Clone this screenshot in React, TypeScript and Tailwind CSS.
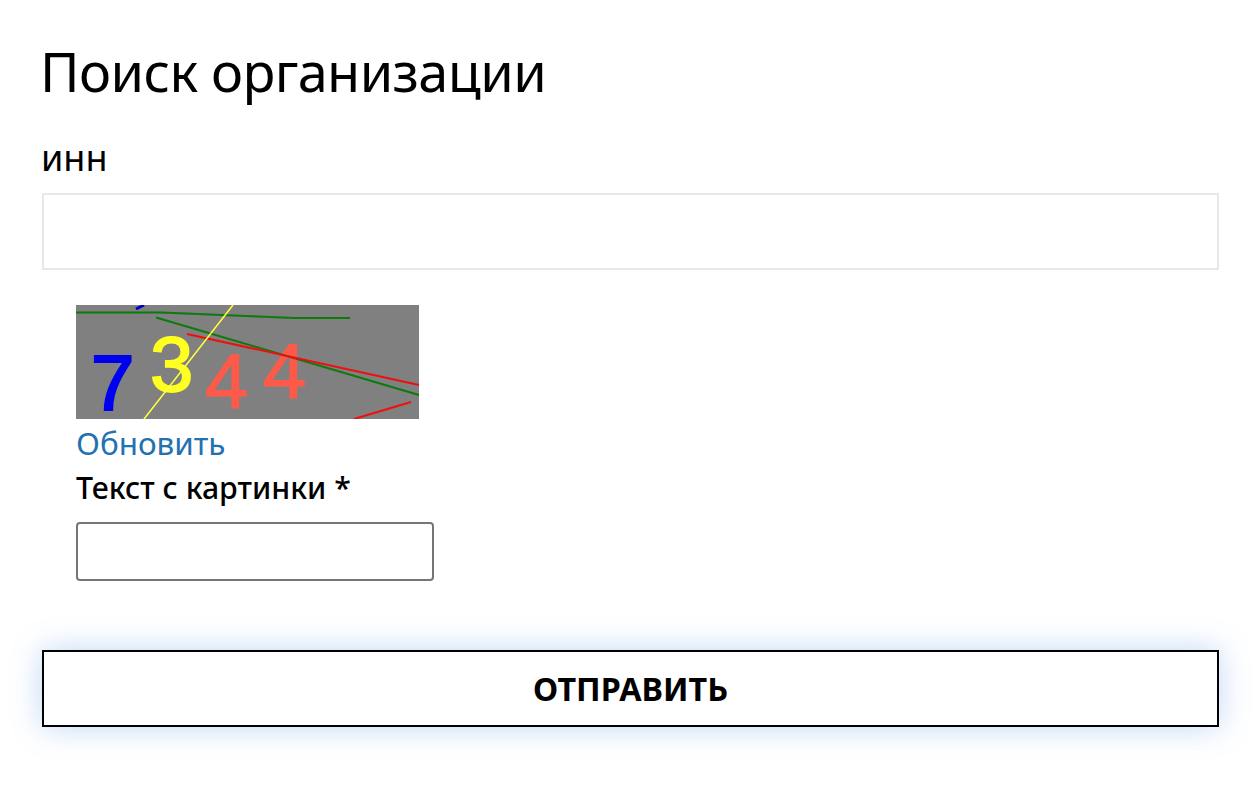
const App = () => {
  return (
    <div className="min-h-[795px] bg-white pl-[42px] pr-[41px] text-black font-['Noto_Sans',sans-serif]">
      {/* заголовок */}
      <h1 className="-ml-[2px] pt-[29px] text-[54px] leading-[84px] font-normal tracking-[-0.6px]">Поиск организации</h1>

      <label className="-ml-[1px] mt-[19px] block text-[36px] leading-[52px]">инн</label>
      <input className="mt-[9px] block h-[77px] w-full border-2 border-[#e8e8e8] bg-white outline-none" />

      {/* капча */}
      <div className="mt-[35px] pl-[34px]">
        <svg width="343" height="114" viewBox="0 0 343 114" className="block">
          <defs>
            <filter id="soft">
              <feGaussianBlur stdDeviation="0.6" />
            </filter>
          </defs>
          <rect width="343" height="114" fill="#808080" />
          <g filter="url(#soft)" fontFamily="'Liberation Sans', sans-serif">
            <text x="15" y="105" fontSize="78" fill="#0000f0" stroke="#0000f0" strokeWidth="2.2">7</text>
            <text x="74" y="86" fontSize="78" fill="#ffff20" stroke="#ffff20" strokeWidth="1.8">3</text>
            <text x="129" y="103" fontSize="78" fill="#ff5a4a" stroke="#ff5a4a" strokeWidth="1.2">4</text>
            <text x="187" y="93" fontSize="78" fill="#ff5a4a" stroke="#ff5a4a" strokeWidth="1.2">4</text>
            <g fill="none" strokeWidth="2">
              <polyline points="0,7.5 85,7.5 218,13 274,13" stroke="#0a7a0a" />
              <line x1="80" y1="12.5" x2="343" y2="90" stroke="#0a7a0a" />
              <line x1="111" y1="29" x2="343" y2="80" stroke="#f01010" />
              <line x1="157" y1="0" x2="68" y2="114" stroke="#ffff40" strokeWidth="1.5" />
              <line x1="278" y1="114" x2="335" y2="97" stroke="#f01010" />
              <line x1="60" y1="4" x2="68" y2="0" stroke="#0000c0" strokeWidth="3" />
            </g>
          </g>
        </svg>
        <a href="#" className="block text-[31.4px] leading-[48px] text-[#2271b1]">Обновить</a>
        <label className="block text-[30.3px] leading-[41px] font-medium">Текст с картинки *</label>
        <input className="mt-[14px] block h-[59px] w-[358px] rounded-[4px] border-2 border-[#767676] bg-white outline-none" />
      </div>

      <button className="mt-[69px] block h-[77px] w-full border-2 border-black bg-white text-[32.3px] font-bold uppercase shadow-[0_0_30px_rgba(70,140,225,0.35)]">
        Отправить
      </button>
    </div>
  );
};

export default App;
